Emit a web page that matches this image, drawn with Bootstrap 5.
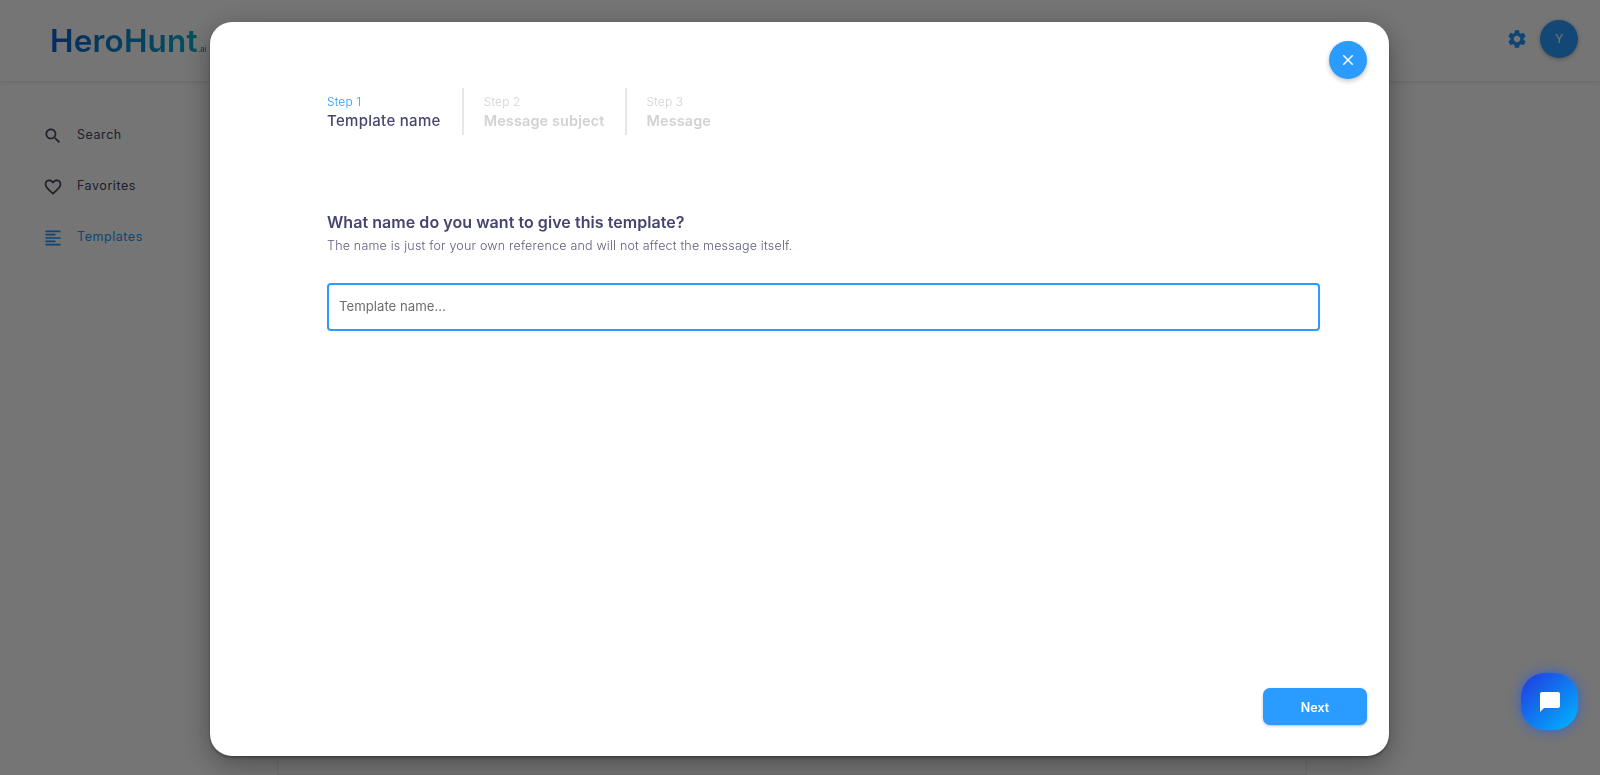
<!DOCTYPE html>
<html lang="en">
<head>
<meta charset="utf-8">
<title>HeroHunt</title>
<link href="https://cdn.jsdelivr.net/npm/bootstrap@5.3.0/dist/css/bootstrap.min.css" rel="stylesheet">
<style>
html,body{height:775px;overflow:hidden}
body{font-family:"Inter","Liberation Sans",sans-serif;background:#fff;color:#3d3d6b}
.hh-top{height:81px;padding:0 22px 3px 50px;box-shadow:0 1px 4px rgba(0,0,0,.12)}
.hh-logo{font-size:31.5px;font-weight:600;line-height:1;letter-spacing:.2px;margin-top:3px;background:linear-gradient(90deg,#0b5fd0,#0ab5c8);-webkit-background-clip:text;background-clip:text;color:transparent}
.hh-logo small{font-size:7.5px;letter-spacing:0}
.hh-gear{fill:#2196ff;width:22px;height:22px}
.hh-avatar{width:38px;height:38px;background:#2a9bff;color:#fff;font-size:12px;box-shadow:0 1px 4px rgba(0,0,0,.3)}
.hh-body{height:694px}
.hh-side{width:277px;padding:29px 0 0 43px}
.hh-side a{height:51px;font-size:12.5px;font-weight:400;letter-spacing:.55px;color:#454562;text-decoration:none;gap:14px}
.hh-side svg{width:20px;height:20px;fill:#454562;flex:none}
.hh-side a.hh-on{color:#2196ff}
.hh-side a.hh-on svg{fill:#2196ff}
.hh-sheet{width:1030px;border:1px solid #efefef;margin-top:40px}
.hh-back{position:fixed;inset:0;background:rgba(0,0,0,.54)}
.hh-modal{position:absolute;left:210px;top:22px;width:1179px;height:734px;background:#fff;border-radius:22px;box-shadow:0 2px 3px rgba(0,0,0,.3),0 8px 30px rgba(0,0,0,.35);padding:66px 69px 31px 117px}
.hh-close{position:absolute;top:19px;right:22px;width:38px;height:38px;padding:0;border:0;background:#2a9bff;box-shadow:0 2px 5px rgba(0,0,0,.25)}
.hh-close svg{width:18px;height:18px;fill:#fff}
.hh-step{height:47px;padding:0 20px;border-left:2px solid #e6e6e6}
.hh-step:first-child{padding:0 21px 0 0;border-left:0}
.hh-step .hh-n{font-size:12px;font-weight:300;line-height:17px;padding-top:5px;color:#d2d2d6;letter-spacing:.15px}
.hh-step .hh-t{font-size:14.5px;font-weight:600;line-height:21px;color:#d2d2d6;letter-spacing:.1px}
.hh-step.hh-cur .hh-n{color:#2a9bff}
.hh-step.hh-cur .hh-t{color:#45456f;font-weight:500;font-size:15px;letter-spacing:.3px}
.hh-q{font-size:16px;font-weight:600;color:#45456f;line-height:22px;margin:76px 0 0;letter-spacing:.05px}
.hh-sub{font-size:12.5px;font-weight:300;color:#5d5d80;line-height:18px;margin:4px 0 0;letter-spacing:.2px}
.hh-input{height:48px;margin-top:28px;border:2px solid #2a9bff;border-radius:4px;padding:0 10px 3px;font-size:13.2px;color:#555;box-shadow:none}
.hh-input::placeholder{color:#6e6e6e;opacity:1}
.hh-input:focus{border-color:#2a9bff;box-shadow:none}
.hh-foot{margin-right:-47px}
.hh-next{width:104px;height:37px;background:#2a9bff;color:#fff;border:0;border-radius:7px;font-size:12.5px;font-weight:600;box-shadow:0 1px 3px rgba(0,0,0,.25);padding:3px 0 0}
.hh-next:hover{background:#2a9bff;color:#fff}
.hh-chat{position:absolute;left:1521px;top:673px;width:57px;height:57px;border-radius:24px;background:linear-gradient(135deg,#2238e0,#00b7ff);box-shadow:0 0 12px rgba(20,90,255,.75)}
.hh-chat svg{width:24px;height:24px;fill:#fff}
</style>
</head>
<body>
<header class="hh-top d-flex align-items-center justify-content-between">
  <div class="hh-logo">HeroHunt<small>.ai</small></div>
  <div class="d-flex align-items-center gap-2">
    <svg class="hh-gear" viewBox="0 0 24 24"><path d="M19.14 12.94c.04-.3.06-.61.06-.94 0-.32-.02-.64-.07-.94l2.03-1.58c.18-.14.23-.41.12-.61l-1.92-3.32c-.12-.22-.37-.29-.59-.22l-2.39.96c-.5-.38-1.03-.7-1.62-.94l-.36-2.54c-.04-.24-.24-.41-.48-.41h-3.84c-.24 0-.43.17-.47.41l-.36 2.54c-.59.24-1.13.57-1.62.94l-2.39-.96c-.22-.08-.47 0-.59.22L2.74 8.87c-.12.21-.08.47.12.61l2.03 1.58c-.05.3-.09.63-.09.94s.02.64.07.94l-2.03 1.58c-.18.14-.23.41-.12.61l1.92 3.32c.12.22.37.29.59.22l2.39-.96c.5.38 1.03.7 1.62.94l.36 2.54c.05.24.24.41.48.41h3.84c.24 0 .44-.17.47-.41l.36-2.54c.59-.24 1.13-.56 1.62-.94l2.39.96c.22.08.47 0 .59-.22l1.92-3.32c.12-.22.07-.47-.12-.61l-2.01-1.58zM12 15.6c-1.98 0-3.6-1.62-3.6-3.6s1.62-3.6 3.6-3.6 3.6 1.62 3.6 3.6-1.62 3.6-3.6 3.6z"/></svg>
    <div class="hh-avatar rounded-circle d-flex align-items-center justify-content-center ms-1">Y</div>
  </div>
</header>
<div class="hh-body d-flex">
  <nav class="hh-side d-flex flex-column">
    <a href="#" class="d-flex align-items-center"><svg viewBox="0 0 24 24"><path d="M15.5 14h-.79l-.28-.27C15.41 12.59 16 11.11 16 9.5 16 5.91 13.09 3 9.5 3S3 5.91 3 9.5 5.91 16 9.5 16c1.61 0 3.09-.59 4.23-1.57l.27.28v.79l5 4.99L20.49 19l-4.99-5zm-6 0C7.01 14 5 11.99 5 9.5S7.01 5 9.5 5 14 7.01 14 9.5 11.99 14 9.5 14z"/></svg>Search</a>
    <a href="#" class="d-flex align-items-center"><svg viewBox="0 0 24 24"><path d="M16.5 3c-1.74 0-3.41.81-4.5 2.09C10.91 3.81 9.24 3 7.5 3 4.42 3 2 5.42 2 8.5c0 3.78 3.4 6.86 8.55 11.54L12 21.35l1.45-1.32C18.6 15.36 22 12.28 22 8.5 22 5.42 19.58 3 16.5 3zm-4.4 15.55l-.1.1-.1-.1C7.14 14.24 4 11.39 4 8.5 4 6.5 5.5 5 7.5 5c1.54 0 3.04.99 3.57 2.36h1.87C13.46 5.99 14.96 5 16.5 5c2 0 3.5 1.5 3.5 3.5 0 2.89-3.14 5.74-7.9 10.05z"/></svg>Favorites</a>
    <a href="#" class="d-flex align-items-center hh-on"><svg viewBox="0 0 24 24"><path d="M15 15H3v2h12v-2zm0-8H3v2h12V7zM3 13h18v-2H3v2zm0 8h18v-2H3v2zM3 3v2h18V3H3z"/></svg>Templates</a>
  </nav>
  <div class="hh-sheet"></div>
</div>
<div class="hh-back">
  <div class="hh-modal d-flex flex-column" role="dialog">
    <button class="hh-close rounded-circle d-flex align-items-center justify-content-center" aria-label="Close"><svg viewBox="0 0 24 24"><path d="M19 6.41L17.59 5 12 10.59 6.41 5 5 6.41 10.59 12 5 17.59 6.41 19 12 13.41 17.59 19 19 17.59 13.41 12z"/></svg></button>
    <div class="d-flex">
      <div class="hh-step hh-cur"><div class="hh-n">Step 1</div><div class="hh-t">Template name</div></div>
      <div class="hh-step"><div class="hh-n">Step 2</div><div class="hh-t">Message subject</div></div>
      <div class="hh-step"><div class="hh-n">Step 3</div><div class="hh-t">Message</div></div>
    </div>
    <h2 class="hh-q">What name do you want to give this template?</h2>
    <p class="hh-sub">The name is just for your own reference and will not affect the message itself.</p>
    <input class="form-control hh-input" type="text" placeholder="Template name...">
    <div class="mt-auto d-flex justify-content-end hh-foot"><button class="btn hh-next">Next</button></div>
  </div>
</div>
<div class="hh-chat d-flex align-items-center justify-content-center"><svg viewBox="0 0 24 24"><path d="M20 2H4c-1.1 0-2 .9-2 2v18l4-4h14c1.1 0 2-.9 2-2V4c0-1.1-.9-2-2-2z"/></svg></div>
<script src="https://cdn.jsdelivr.net/npm/bootstrap@5.3.0/dist/js/bootstrap.bundle.min.js"></script>
</body>
</html>
